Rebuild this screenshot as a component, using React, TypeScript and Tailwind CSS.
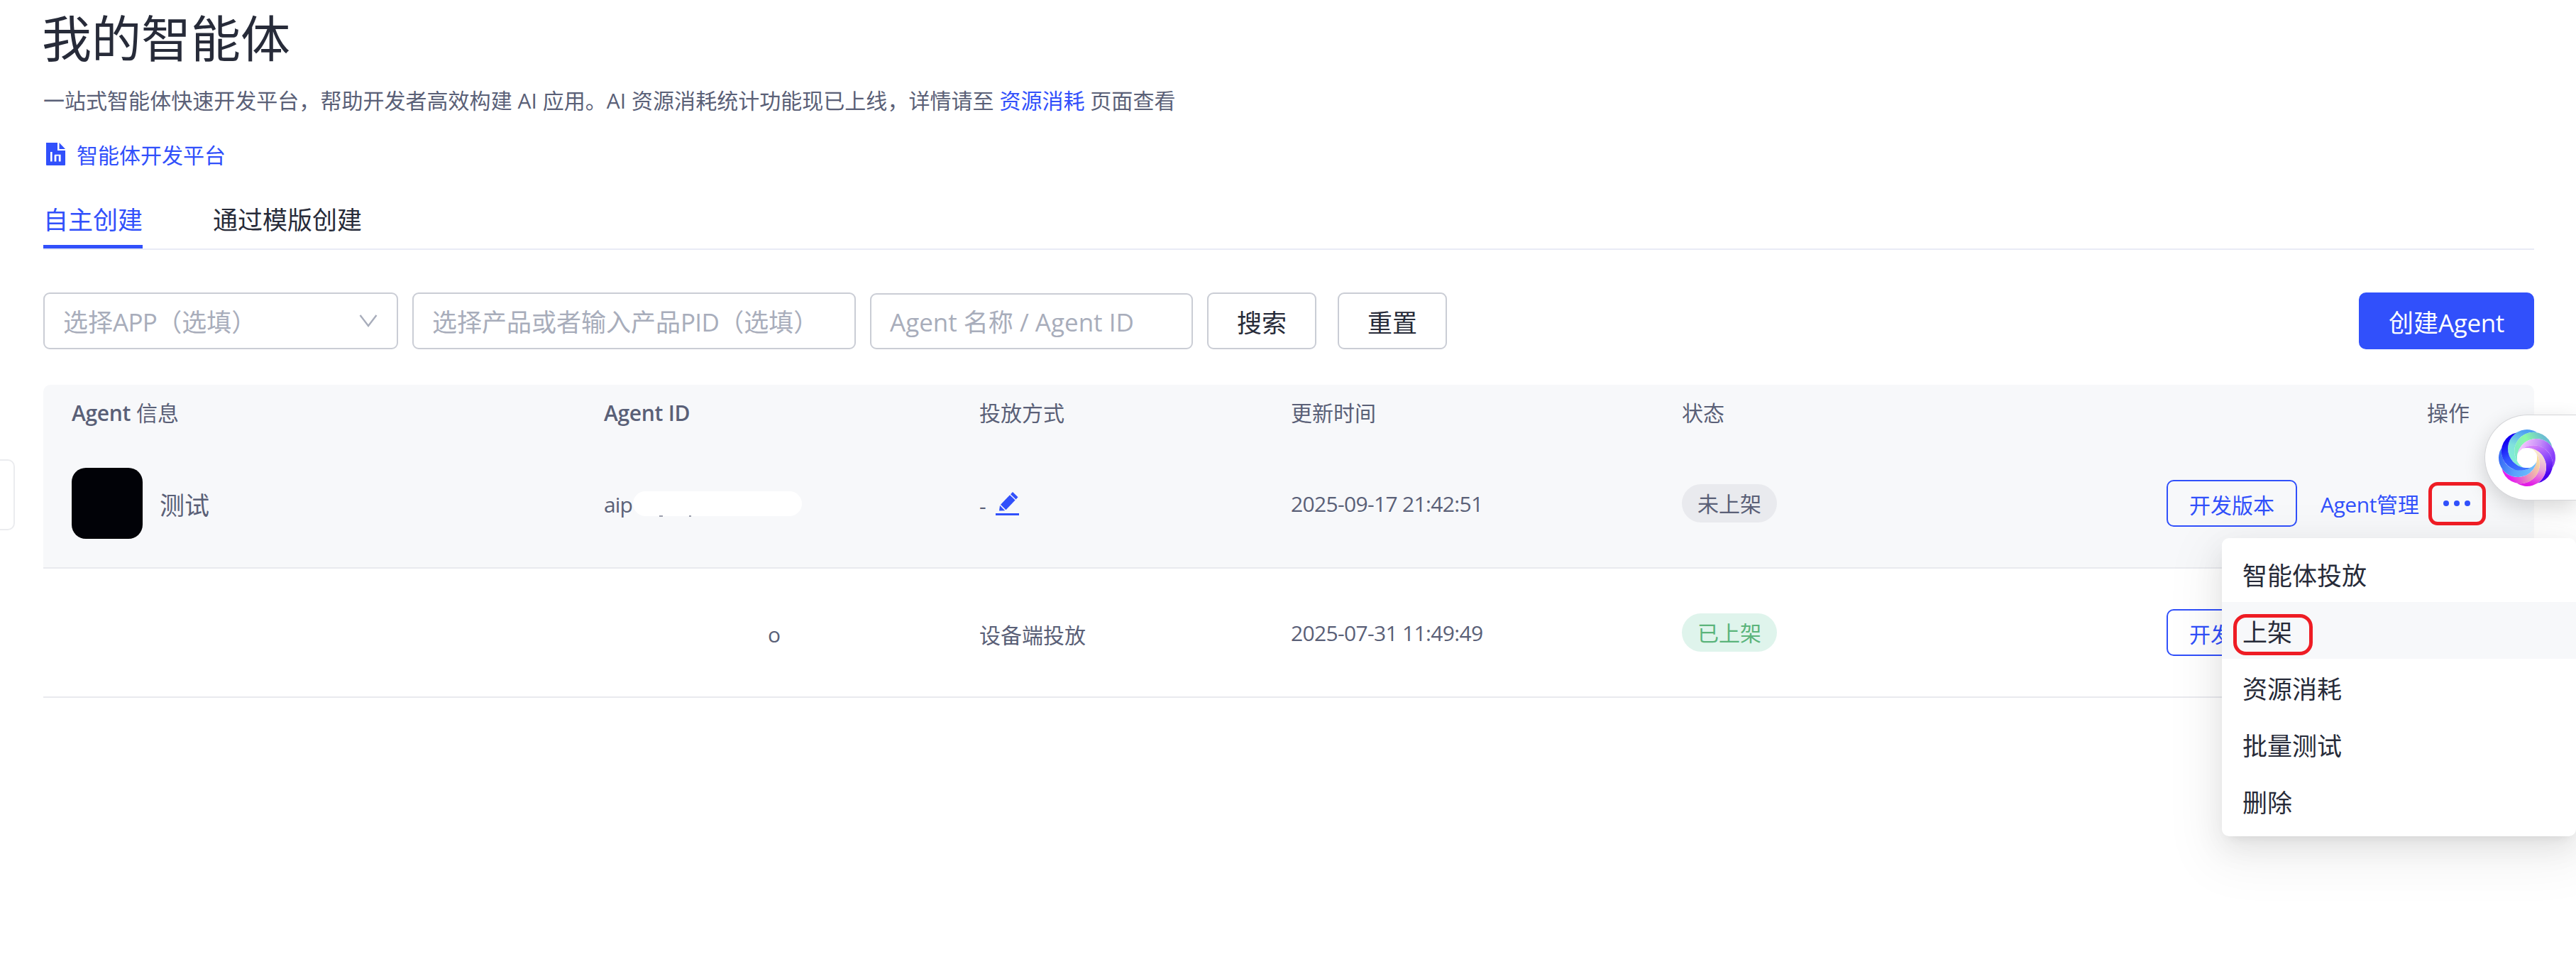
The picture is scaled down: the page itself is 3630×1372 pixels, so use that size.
import type { ReactNode } from 'react';

const petalStops: [string, string, string][] = [
  ['#4f9ff3', '#80e2dc', '#84f2d2'],
  ['#6bbdd2', '#8cf9a6', '#7fe8cc'],
  ['#8a3ffb', '#c48cf8', '#f6c8fd'],
  ['#4a00ee', '#8f4bfb', '#e08bfb'],
  ['#e21be6', '#e7a0dc', '#fbeecb'],
  ['#e61bf0', '#e98fbd', '#f9e39c'],
  ['#3a6ff6', '#5aa0fb', '#6cc0ff'],
  ['#1200f2', '#2f52ff', '#3f78ff'],
];

function SwirlLogo() {
  return (
    <svg viewBox="-120 -120 240 240" className="size-20">
      <defs>
        {petalStops.map(([a, b, c], i) => (
          <linearGradient key={i} id={`petal-${i}`} gradientUnits="userSpaceOnUse" x1="30" y1="-107" x2="-17" y2="40">
            <stop offset="0.05" stopColor={a} />
            <stop offset="0.5" stopColor={b} />
            <stop offset="1" stopColor={c} />
          </linearGradient>
        ))}
      </defs>
      {petalStops.map((_, i) => (
        <path
          key={i}
          transform={`rotate(${i * 45})`}
          fill={`url(#petal-${i})`}
          d="M44.2 -106.8A81 81 0 1 0 -16.7 40.3A81 81 0 0 1 44.2 -106.8Z"
        />
      ))}
      <circle r="42" fill="#fff" />
    </svg>
  );
}

function FileIcon() {
  return (
    <svg viewBox="0 0 27 32" className="h-8 w-[27px]" fill="#3150fb">
      <path d="M0 0H16V11H27V31Q27 32 26 32H1Q0 32 0 31Z" />
      <path d="M18.5 0L27 9H18.5Z" />
      <path d="M6 13H8.6V26.5H6ZM11.6 17.5H14.4V26.5H11.6ZM17.8 17.5H20.6V26.5H17.8ZM12 16.8H20.6V18.6H12Z" fill="#fff" />
    </svg>
  );
}

function EditIcon() {
  return (
    <svg viewBox="0 0 33 33" className="h-[33px] w-[33px]" fill="#3150fb">
      <path d="M24 0L31.5 7.2L28.6 10.6L21 3.2Z" />
      <path d="M20 4.2L27.6 11.6L14.5 25.2L7 17.8Z" />
      <path d="M6 19L13.2 26.2L5 26.6Z" />
      <path d="M0 30H33V33H0Z" />
    </svg>
  );
}

function Field({ className, children }: { className: string; children: ReactNode }) {
  return (
    <div className={`flex items-center justify-between rounded-[9px] border-2 border-[#cacdd5] bg-white pr-[27px] pl-[26px] text-[35px] text-[#a8adbb] ${className}`}>
      {children}
    </div>
  );
}

function Actions() {
  return (
    <div className="flex items-center justify-end pr-[68px] text-[30px] text-[#3150fb]">
      <div className="mr-[33px] flex h-[66px] w-[184px] items-center justify-center rounded-[10px] border-2 border-[#3150fb] pt-1">开发版本</div>
      <div className="mr-3 w-[140px] pt-0.5 whitespace-nowrap">
        <span className="tracking-[-0.015em]">Agent</span>管理
      </div>
      <div className="flex w-[81px] items-center justify-center gap-[7px] pr-0.5">
        <span className="size-2 rounded-full bg-[#3150fb]" />
        <span className="size-2 rounded-full bg-[#3150fb]" />
        <span className="size-2 rounded-full bg-[#3150fb]" />
      </div>
    </div>
  );
}

const cols = 'grid grid-cols-[750px_530px_439px_550px_1fr_1fr] *:pl-10 items-center';
const menu = ['智能体投放', '上架', '资源消耗', '批量测试', '删除'];

export default function App() {
  return (
    <div className="relative h-[1372px] w-full overflow-hidden bg-white pr-[59px] pl-[61px] font-['Open_Sans','Noto_Sans_CJK_SC',sans-serif] text-[#5a6077]">
      <h1 className="-ml-0.5 h-[106px] text-[70px] leading-[108px] text-[#272b39]">我的智能体</h1>
      <p className="h-[72px] text-[30px] leading-[72px] tracking-[0.03px] whitespace-pre">
        一站式智能体快速开发平台，帮助开发者高效构建 AI 应用。AI 资源消耗统计功能现已上线，详情请至 <a className="text-[#3150fb]">资源消耗</a> 页面查看
      </p>
      <div className="flex h-[78px] items-center gap-4 pl-1 text-[30px] text-[#3150fb]">
        <FileIcon />
        <span className="pt-0.5">智能体开发平台</span>
      </div>
      <div className="flex h-24 gap-[100px] border-b-2 border-[#e9ebf5] text-[35px] leading-[108px]">
        <div className="h-[94px] border-b-[5px] border-[#3150fb] text-[#3150fb]">自主创建</div>
        <div className="-ml-px text-[#272b39]">通过模版创建</div>
      </div>

      <div className="mt-[60px] flex h-20 items-end text-[35px] text-[#272b39]">
        <Field className="h-20 w-[500px]">
          <span className="pt-1">选择<span className="tracking-[-0.02em]">APP</span>（选填）</span>
          <svg viewBox="0 0 26 18" className="h-[18px] w-[26px]" fill="none" stroke="#a8adbb" strokeWidth="2.4">
            <path d="M1.5 1L13 16L24.5 1" />
          </svg>
        </Field>
        <Field className="ml-5 h-20 w-[625px]">
          <span className="pt-1">选择产品或者输入产品<span className="tracking-[-0.02em]">PID</span>（选填）</span>
        </Field>
        <Field className="ml-5 h-[79px] w-[455px]">
          <span className="pt-1">Agent 名称 / Agent ID</span>
        </Field>
        <button className="ml-5 flex h-20 w-[154px] items-center justify-center rounded-[9px] border-2 border-[#cacdd5] pt-1.5">搜索</button>
        <button className="ml-[30px] flex h-20 w-[154px] items-center justify-center rounded-[9px] border-2 border-[#cacdd5] pt-1.5">重置</button>
        <button className="ml-auto flex h-20 w-[247px] items-center justify-center rounded-[10px] bg-[#3150fb] pt-1.5 text-white">
          创建<span className="tracking-[-0.01em]">Agent</span>
        </button>
      </div>

      <div className="mt-[50px] text-[30px]">
        <div className={`${cols} h-[77px] rounded-t-[10px] bg-[#f7f8fa] pt-0.5`}>
          <div><span className="font-semibold tracking-[-0.01em]">Agent</span> 信息</div>
          <div className="font-semibold tracking-[-0.01em]">Agent ID</div>
          <div className="-ml-px">投放方式</div>
          <div className="-ml-px">更新时间</div>
          <div>状态</div>
          <div className="pr-[91px] text-right">操作</div>
        </div>
        <div className={`${cols} h-[182px] border-b-2 border-[#e9eaee] bg-[#f7f8fa]`}>
          <div className="flex items-center gap-6">
            <div className="size-[100px] rounded-[20px] bg-[#010207]" />
            <span className="pt-1.5 text-[35px]">测试</span>
          </div>
          <div className="flex items-center">
            <span className="w-[41px] pt-0.5 tracking-[-0.03em]">aip</span>
            <span className="relative h-[35px] w-[238px] rounded-[18px] bg-white">
              <span className="absolute -bottom-px left-[37px] h-0.5 w-[5px] bg-[#5a6077]/60" />
              <span className="absolute -bottom-px left-[79px] h-0.5 w-[3px] bg-[#5a6077]/60" />
            </span>
          </div>
          <div className="flex items-center gap-3">
            <span className="-ml-px w-[11px] pt-1.5">-</span>
            <EditIcon />
          </div>
          <div className="-ml-px tracking-[-0.022em]">2025-09-17 21:42:51</div>
          <div>
            <div className="flex h-[54px] w-[134px] items-center justify-center rounded-full bg-[#e9eaee]">未上架</div>
          </div>
          <Actions />
        </div>
        <div className={`${cols} h-[182px] border-b-2 border-[#e9eaee]`}>
          <div />
          <div className="pt-1"><span className="ml-[231px]">o</span></div>
          <div className="-ml-px pt-1.5">设备端投放</div>
          <div className="-ml-px tracking-[-0.022em]">2025-07-31 11:49:49</div>
          <div>
            <div className="flex h-[54px] w-[134px] items-center justify-center rounded-full bg-[#dff4ec] text-[#5bb47b]">已上架</div>
          </div>
          <Actions />
        </div>
      </div>

      <div className="absolute top-[647px] -left-3 h-[100px] w-[33px] rounded-[10px] border-2 border-[#ebecef] bg-white" />

      <div className="absolute top-[758px] left-[3131px] h-[420px] w-[499px] rounded-[10px] bg-white py-[10px] text-[35px] text-[#272b39] shadow-[0_15px_40px_0_rgba(0,0,0,0.08),0_8px_15px_-10px_rgba(0,0,0,0.12),0_22px_70px_20px_rgba(0,0,0,0.05)]">
        {menu.map((item, i) => (
          <div key={item} className={`flex h-20 items-center pt-1.5 pl-[29px] ${i === 1 ? 'bg-[#f7f8fa]' : ''}`}>{item}</div>
        ))}
      </div>

      <div className="absolute top-[584px] right-0 flex h-[121px] w-[129px] items-center rounded-l-full border-y border-l border-[#d5d6d9] bg-white pl-[19px] shadow-[0_10px_30px_0_rgba(0,0,0,0.16)]">
        <SwirlLogo />
      </div>

      <div className="absolute top-[679px] left-[3422px] h-[61px] w-[81px] rounded-[13px] border-[5px] border-[#ee1c24]" />
      <div className="absolute top-[865px] left-[3147px] h-[58px] w-[112px] rounded-[18px] border-[5px] border-[#ee1c24]" />
    </div>
  );
}
